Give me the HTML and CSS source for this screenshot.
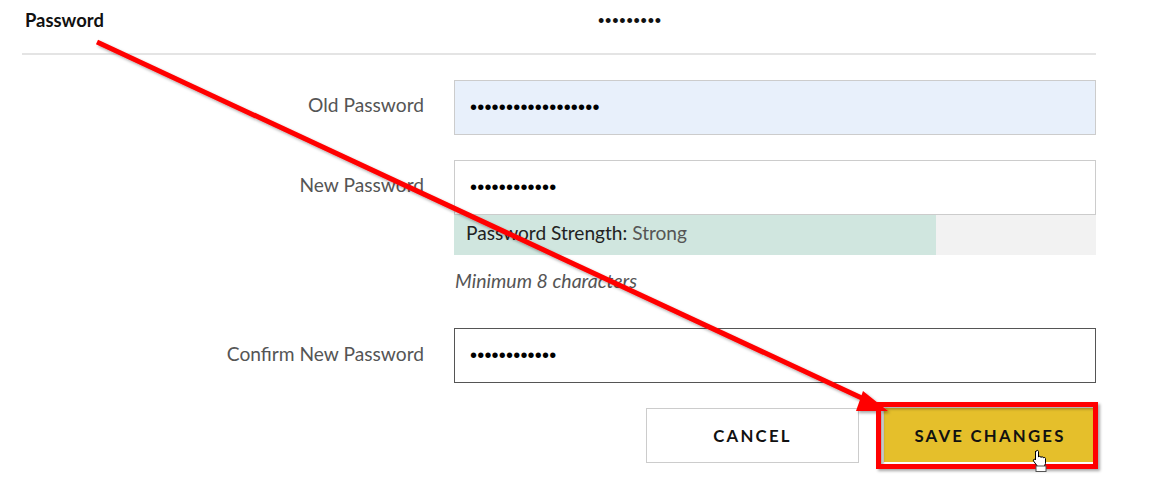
FILE: index.html
```html
<!DOCTYPE html>
<html lang="en">
<head>
    <meta charset="UTF-8">
    <title>Password</title>
    <link rel="stylesheet" href="styles.css">
</head>
<body>
    <div class="account-form">
        <div class="summary-row">
            <div class="summary-label">Password</div>
            <div class="summary-value">•••••••••</div>
        </div>
        <div class="field-row first-row">
            <label class="field-label">Old Password</label>
            <div class="field-input autofilled">••••••••••••••••••</div>
        </div>
        <div class="field-row new-row">
            <label class="field-label">New Password</label>
            <div>
                <div class="field-input">••••••••••••</div>
                <div class="strength-track">
                    <div class="strength-fill">Password Strength: <span class="strength-value">Strong</span></div>
                </div>
                <div class="field-hint">Minimum 8 characters</div>
            </div>
        </div>
        <div class="field-row confirm-row">
            <label class="field-label confirm-label">Confirm New Password</label>
            <div class="field-input focused">••••••••••••</div>
        </div>
        <div class="form-actions">
            <button class="btn cancel-btn">CANCEL</button>
            <button class="btn save-btn">SAVE CHANGES</button>
        </div>
    </div>

    <!-- annotation drawn over the screenshot -->
    <svg class="annotation" width="1158" height="495" viewBox="0 0 1158 495">
        <defs>
            <filter id="soft" x="-5%" y="-5%" width="110%" height="110%">
                <feDropShadow dx="2" dy="2" stdDeviation="1.5" flood-color="#000" flood-opacity="0.35"/>
            </filter>
        </defs>
        <g filter="url(#soft)">
            <line x1="97" y1="42" x2="866" y2="400" stroke="#ff0000" stroke-width="5"/>
            <polygon points="888,411 856,411 863,391" fill="#ff0000"/>
            <rect x="878.5" y="404.5" width="217" height="62" fill="none" stroke="#ff0000" stroke-width="5"/>
        </g>
        <g>
            <path d="M1036 451.500 c0-1.500 2.500-1.500 2.500 0 v5.500 c0-1 2.500-1 2.500 0.500 c0-1 2.500-1 2.500 0.500 c0-0.800 2-0.800 2 0.500 v5 l-1.500 3.500 h-6 l-4.500-6 c-0.800-1.500 1-2.500 2-1 v-9 z" fill="#fff" stroke="#000" stroke-width="1"/>
            <rect x="1036" y="466" width="10" height="5.500" fill="#fff" stroke="#555" stroke-width="1"/>
        </g>
    </svg>
</body>
</html>
```

FILE: styles.css
```css
* {
    margin: 0;
    padding: 0;
    box-sizing: border-box;
}
body {
    font-family: 'Lato', sans-serif;
    background: white;
    color: #4a4a4a;
    width: 1158px;
    height: 495px;
    overflow: hidden;
    position: relative;
}
.account-form {
    width: 1074px;
    margin-left: 22px;
}
.summary-row {
    display: grid;
    grid-template-columns: 573px 1fr;
    height: 55px;
    padding: 10px 0 0 3px;
    border-bottom: 2px solid #e4e4e4;
}
.summary-label {
    font-size: 18.400px;
    font-weight: 700;
    line-height: 20px;
    color: #111;
}
.summary-value {
    font-size: 18px;
    line-height: 22px;
    color: #111;
    font-family: 'Liberation Sans', sans-serif;
    letter-spacing: 0.8px;
}
.field-row {
    display: grid;
    grid-template-columns: 402px 642px;
    column-gap: 30px;
}
.first-row {
    margin-top: 25px;
}
.new-row {
    margin-top: 25px;
}
.confirm-row {
    margin-top: 36px;
}
.field-label {
    font-size: 19.200px;
    line-height: 50px;
    text-align: right;
    color: #555;
}
.confirm-label {
    line-height: 52px;
}
.field-input {
    height: 55px;
    border: 1px solid #ccc;
    padding-left: 15px;
    font-family: 'Liberation Sans', sans-serif;
    font-size: 20px;
    line-height: 53px;
    letter-spacing: 0.2px;
    color: #000;
}
.autofilled {
    background: #e8f0fb;
}
.focused {
    border-color: #555;
}
.strength-track {
    height: 40px;
    background: #f2f2f2;
}
.strength-fill {
    width: 482px;
    height: 40px;
    background: #d0e6df;
    padding-left: 12px;
    font-size: 19.100px;
    line-height: 35px;
    color: #222;
}
.strength-value {
    color: #555;
}
.field-hint {
    margin-top: 15px;
    padding-left: 1px;
    font-size: 19.500px;
    font-style: italic;
    line-height: 22px;
    color: #555;
}
.form-actions {
    display: flex;
    justify-content: flex-end;
    gap: 24px;
    margin-top: 25px;
}
.btn {
    width: 213px;
    height: 55px;
    font-family: 'Lato', sans-serif;
    font-size: 16.800px;
    font-weight: 700;
    letter-spacing: 2.2px;
    color: #111;
    cursor: pointer;
}
.cancel-btn {
    background: white;
    border: 1px solid #ccc;
}
.save-btn {
    background: #e5bf2b;
    border: none;
    border-left: 1px solid #ddd;
    border-bottom: 1px solid #fff;
}
.annotation {
    position: absolute;
    left: 0;
    top: 0;
}
```
